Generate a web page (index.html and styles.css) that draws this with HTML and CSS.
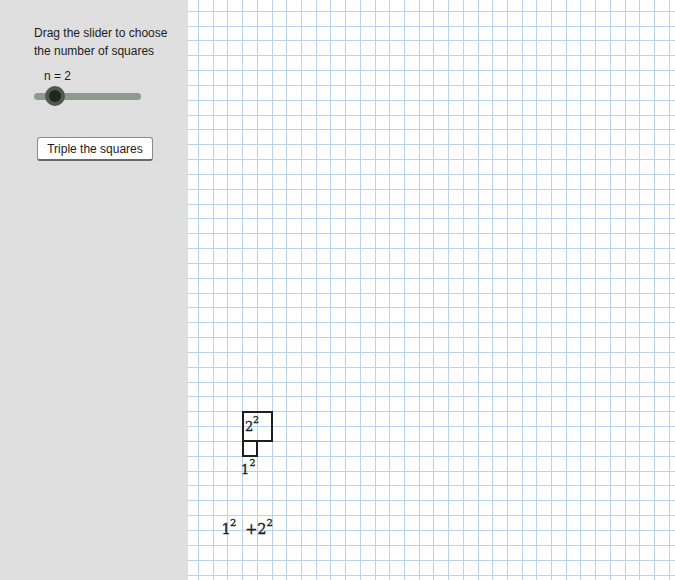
FILE: index.html
```html
<!DOCTYPE html>
<html lang="en">
<head>
<meta charset="utf-8">
<title>Sum of squares</title>
<link rel="stylesheet" href="styles.css">
</head>
<body>
<div class="app">
  <aside class="panel">
    <p class="intro">Drag the slider to choose<br>the number of squares</p>
    <div class="slider-label">n = 2</div>
    <div class="slider">
      <div class="track"></div>
      <div class="knob"></div>
    </div>
    <button class="btn" type="button">Triple the squares</button>
  </aside>
  <main class="canvas">
    <svg class="board" width="487" height="580" viewBox="0 0 487 580" xmlns="http://www.w3.org/2000/svg">
      <path class="grid" shape-rendering="crispEdges" d="M10.5 0V580M25.5 0V580M39.5 0V580M54.5 0V580M69.5 0V580M84.5 0V580M98.5 0V580M113.5 0V580M128.5 0V580M142.5 0V580M157.5 0V580M172.5 0V580M187.5 0V580M201.5 0V580M216.5 0V580M231.5 0V580M245.5 0V580M260.5 0V580M275.5 0V580M290.5 0V580M304.5 0V580M319.5 0V580M334.5 0V580M348.5 0V580M363.5 0V580M378.5 0V580M392.5 0V580M407.5 0V580M422.5 0V580M437.5 0V580M451.5 0V580M466.5 0V580M481.5 0V580M0 11.5H487M0 26.5H487M0 40.5H487M0 55.5H487M0 70.5H487M0 85.5H487M0 100.5H487M0 115.5H487M0 129.5H487M0 144.5H487M0 159.5H487M0 174.5H487M0 189.5H487M0 204.5H487M0 218.5H487M0 233.5H487M0 248.5H487M0 263.5H487M0 278.5H487M0 293.5H487M0 307.5H487M0 322.5H487M0 337.5H487M0 352.5H487M0 367.5H487M0 382.5H487M0 396.5H487M0 411.5H487M0 426.5H487M0 441.5H487M0 456.5H487M0 471.5H487M0 485.5H487M0 500.5H487M0 515.5H487M0 530.5H487M0 545.5H487M0 560.5H487M0 575.5H487"/>
      <path class="square" d="M55 412H84V441H55Z"/>
      <path class="square" d="M55 441H69V456H55Z"/>
      <text class="m-small" x="57" y="431">2</text>
      <text class="m-sup-s" x="65" y="422.5">2</text>
      <text class="m-small" x="53" y="474">1</text>
      <text class="m-sup-s" x="61.5" y="465.5">2</text>
      <text class="m-big" x="33.5" y="533.5">1</text>
      <text class="m-sup" x="42" y="526">2</text>
      <text class="m-big" x="57.2" y="533.5">+2</text>
      <text class="m-sup" x="78.5" y="525.5">2</text>
    </svg>
  </main>
</div>
</body>
</html>
```
FILE: styles.css
```css
html, body {
  margin: 0;
  padding: 0;
}
body {
  width: 675px;
  height: 580px;
  overflow: hidden;
  background: #ffffff;
  font-family: "Liberation Sans", Arial, sans-serif;
  color: #1c1c1c;
}
.app {
  display: flex;
  width: 675px;
  height: 580px;
}
.panel {
  width: 188px;
  flex: 0 0 188px;
  background: #dfdfdf;
  padding: 24px 0 0 34px;
  box-sizing: border-box;
  display: flex;
  flex-direction: column;
  align-items: flex-start;
}
.intro {
  margin: 0;
  font-size: 12px;
  line-height: 18px;
}
.slider-label {
  margin: 7px 0 0 10px;
  font-size: 12px;
  line-height: 18px;
}
.slider {
  position: relative;
  margin-top: 1px;
  height: 20px;
  width: 107px;
  display: flex;
  align-items: center;
}
.track {
  width: 107px;
  height: 7px;
  border-radius: 4px;
  background: #8c9c8c;
}
.knob {
  position: absolute;
  left: 11px;
  top: 0;
  width: 12px;
  height: 12px;
  border-radius: 50%;
  background: #1d281d;
  border: 4px solid rgba(100, 108, 100, 0.7);
}
.btn {
  margin: 31px 0 0 3px;
  width: 116px;
  height: 24px;
  padding: 0;
  background: #ffffff;
  border: 1px solid #8a8a8a;
  border-bottom: 2px solid #6a6a6a;
  border-radius: 3px;
  font-family: "Liberation Sans", Arial, sans-serif;
  font-size: 12px;
  color: #1c1c1c;
  line-height: 20px;
}
.canvas {
  flex: 1 1 auto;
  background: #ffffff;
  overflow: hidden;
}
.board {
  display: block;
}
.grid {
  fill: none;
  stroke: #bad3ea;
  stroke-width: 1;
}
.square {
  fill: none;
  stroke: #1c1f1a;
  stroke-width: 2;
}
.m-small, .m-big, .m-sup, .m-sup-s {
  font-family: "DejaVu Serif", "Liberation Serif", serif;
  fill: #1c1f1a;
  stroke: #1c1f1a;
  stroke-width: 0.35;
}
.m-small {
  font-size: 13px;
}
.m-sup-s {
  font-size: 9.5px;
}
.m-big {
  font-size: 14.5px;
}
.m-sup {
  font-size: 10px;
}
```
